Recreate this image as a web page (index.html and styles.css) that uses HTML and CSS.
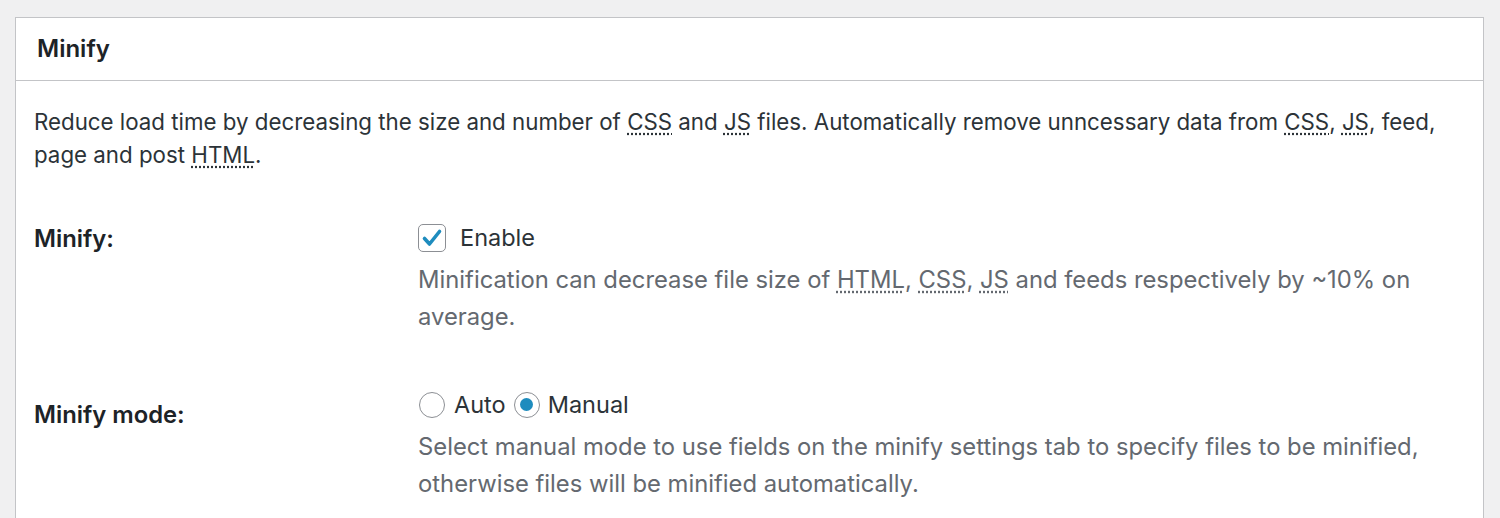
FILE: index.html
```html
<!DOCTYPE html>
<html>
<head>
<meta charset="utf-8">
<link rel="stylesheet" href="styles.css">
</head>
<body>
<div class="postbox">
  <div class="postbox-header"><h2>Minify</h2></div>
  <div class="inside">
    <p class="intro">Reduce load time by decreasing the size and number of <abbr title="Cascading Style Sheet">CSS</abbr> and <abbr title="JavaScript">JS</abbr> files. Automatically remove unncessary data from <abbr title="Cascading Style Sheet">CSS</abbr>, <abbr title="JavaScript">JS</abbr>, feed, page and post <abbr title="Hypertext Markup Language">HTML</abbr>.</p>
    <div class="form-row row-first">
      <div class="label label-first">Minify:</div>
      <div class="field">
        <div class="control">
          <span class="checkbox"><svg viewBox="0 0 28 28" width="28" height="28"><path d="M6.5 14.5 L11.5 20 L21.5 7.5" fill="none" stroke="#1e8cbe" stroke-width="3.6" stroke-linecap="round" stroke-linejoin="round"/></svg></span>
          <span class="ctl-text enable">Enable</span>
        </div>
        <p class="desc">Minification can decrease file size of <abbr title="Hypertext Markup Language">HTML</abbr>, <abbr title="Cascading Style Sheet">CSS</abbr>, <abbr title="JavaScript">JS</abbr> and feeds respectively by ~10% on average.</p>
      </div>
    </div>
    <div class="form-row row-second">
      <div class="label label-second">Minify mode:</div>
      <div class="field">
        <div class="control">
          <span class="radio"></span><span class="ctl-text auto">Auto</span>
          <span class="radio checked"></span><span class="ctl-text manual">Manual</span>
        </div>
        <p class="desc">Select manual mode to use fields on the minify settings tab to specify files to be minified, otherwise files will be minified automatically.</p>
      </div>
    </div>
  </div>
</div>
</body>
</html>
```
FILE: styles.css
```css
html, body {
  margin: 0;
  padding: 0;
}
body {
  background: #f0f0f1;
  font-family: Inter, "Noto Sans", sans-serif;
  color: #1d2327;
  font-size: 23.5px;
}
.postbox {
  margin: 17px 16px 0 15px;
  background: #fff;
  border: 1px solid #c3c4c7;
  border-bottom: none;
  height: 520px;
  box-sizing: border-box;
}
.postbox-header {
  height: 62px;
  border-bottom: 1px solid #c3c4c7;
  display: flex;
  align-items: center;
  padding-left: 21px;
}
.postbox-header h2 {
  margin: 0;
  font-size: 24px;
  font-weight: 600;
  line-height: 1;
}
.inside {
  padding: 0 18px;
}
.intro {
  margin: 24px 0 0;
  font-size: 22.3px;
  line-height: 33px;
  color: #2c3338;
}
abbr {
  text-decoration: underline dotted;
  text-underline-offset: 3px;
}
.form-row {
  display: grid;
  grid-template-columns: 384px 1fr;
}
.row-first { padding-top: 50px; }
.row-second { padding-top: 53px; }
.label {
  font-weight: 600;
  font-size: 23.8px;
  line-height: 33px;
  color: #1d2327;
}
.label-first { padding-top: 1px; }
.label-second { padding-top: 10px; }
.control {
  display: flex;
  align-items: center;
  height: 33px;
}
.checkbox {
  width: 28px;
  height: 28px;
  box-sizing: border-box;
  border: 1.5px solid #8c8f94;
  border-radius: 5px;
  display: flex;
  align-items: center;
  justify-content: center;
  overflow: hidden;
}
.checkbox svg { display: block; flex: none; }
.radio {
  width: 26px;
  height: 26px;
  box-sizing: border-box;
  border: 1.5px solid #8c8f94;
  border-radius: 50%;
  display: flex;
  align-items: center;
  justify-content: center;
  margin-left: 1px;
}
.radio.checked::after {
  content: "";
  width: 13px;
  height: 13px;
  border-radius: 50%;
  background: #1e8cbe;
}
.ctl-text { color: #2c3338; }
.enable { margin-left: 14px; }
.auto { margin-left: 9px; margin-right: 7px; }
.manual { margin-left: 8px; }
.desc {
  margin: 7px 0 0;
  font-size: 23.8px;
  line-height: 37px;
  color: #646970;
}
```
